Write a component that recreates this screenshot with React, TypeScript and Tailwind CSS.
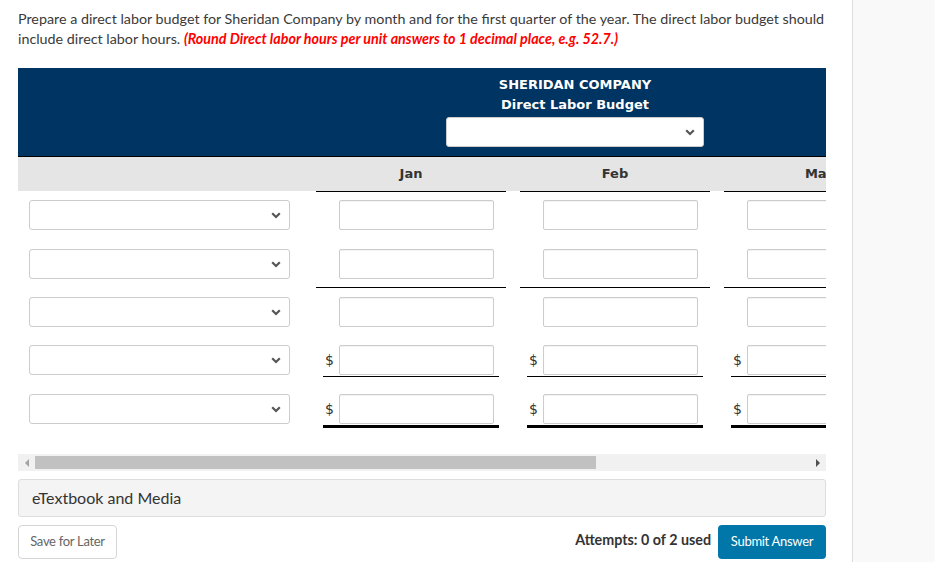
import * as React from "react"

const months = ["Jan", "Feb", "Mar", "Quarter"]

type Row = {
	label: string
	month: string
	outer: string
	dollar: boolean
}

// explicit paddings per row so the rules land where the budget sheet draws them
const rows: Row[] = [
	{ label: "pt-[9px] pb-[19px]", month: "border-t border-black pt-[8px] pb-[19px]", outer: "", dollar: false },
	{ label: "pb-[9px]", month: "border-b border-black pb-[8px]", outer: "", dollar: false },
	{ label: "pt-[9px] pb-[18px]", month: "pt-[9px] pb-[18px]", outer: "", dollar: false },
	{ label: "pb-[19px]", month: "border-b border-black pb-[1px]", outer: "pb-[17px]", dollar: true },
	{ label: "pb-[4px]", month: "border-b-[3px] border-black pb-[1px]", outer: "", dollar: true },
]

function Chevron() {
	return (
		<svg width="10" height="7" viewBox="0 0 10 7" className="text-[#555]">
			<path d="M1.2 1.3 L5 5 L8.8 1.3" fill="none" stroke="currentColor" strokeWidth="2.2" />
		</svg>
	)
}

function SelectBox({ className }: { className: string }) {
	return (
		<div className={`flex h-[30px] items-center justify-end rounded-[3px] border border-[#cccccc] bg-white pr-[8px] ${className}`}>
			<Chevron />
		</div>
	)
}

function Input() {
	return <div className="h-[30px] w-[155px] rounded-[2px] border border-[#cccccc] bg-white shadow-[inset_0_1px_1px_rgba(0,0,0,0.05)]" />
}

function MonthCell({ row }: { row: Row }) {
	if (row.dollar) {
		return (
			<div className={`w-[204px] flex-none ${row.outer}`}>
				<div className={`ml-[7px] flex w-[176px] items-center ${row.month}`}>
					<span className="w-[16px] pl-[2px] text-[14px] text-[#333] [font-family:'DejaVu_Sans',Verdana,sans-serif]">$</span>
					<Input />
				</div>
			</div>
		)
	}
	return (
		<div className="w-[204px] flex-none">
			<div className={`w-[190px] pl-[23px] ${row.month}`}>
				<Input />
			</div>
		</div>
	)
}

export default function App() {
	return (
		<div className="flex min-h-[562px] w-[935px] bg-white text-[#333] [font-family:Lato,'Liberation_Sans',sans-serif]">
			<main className="w-[852px] flex-none pl-[18px] pr-[26px]">
				<p className="pt-[9px] text-[14.3px] leading-[20px] text-[#3a3a3a]">
					Prepare a direct labor budget for Sheridan Company by month and for the first quarter of the year. The direct labor budget should include direct labor hours.{" "}
					<b className="italic text-[#ff0000]">(Round Direct labor hours per unit answers to 1 decimal place, e.g. 52.7.)</b>
				</p>

				<div className="mt-[19px] w-[808px] overflow-hidden">
					<div className="w-[1114px] [font-family:'DejaVu_Sans',Verdana,sans-serif]">
						<div className="flex flex-col items-center border-b border-black bg-[#003462] pb-[9px] pt-[7px] text-white">
							<div className="text-[13px] font-bold leading-[20px]">SHERIDAN COMPANY</div>
							<div className="text-[13px] font-bold leading-[20px]">Direct Labor Budget</div>
							<SelectBox className="mt-[2px] w-[258px]" />
						</div>

						<div className="flex h-[34px] items-center bg-[#e5e5e5]">
							<div className="w-[298px] flex-none" />
							{months.map((m) => (
								<div key={m} className="w-[204px] flex-none">
									<div className="w-[190px] text-center text-[13px] font-bold text-[#333]">{m}</div>
								</div>
							))}
						</div>

						{rows.map((row, i) => (
							<div key={i} className="flex items-start">
								<div className={`w-[298px] flex-none pl-[11px] ${row.label}`}>
									<SelectBox className="w-[261px]" />
								</div>
								{months.map((m) => (
									<MonthCell key={m} row={row} />
								))}
							</div>
						))}
					</div>
				</div>

				{/* horizontal scroll bar of the table */}
				<div className="mt-[26px] flex h-[17px] w-[808px] items-center bg-[#f1f1f1]">
					<div className="flex w-[17px] justify-center">
						<div className="h-0 w-0 border-y-[4px] border-r-[4px] border-y-transparent border-r-[#a3a3a3]" />
					</div>
					<div className="h-[13px] w-[561px] bg-[#c1c1c1]" />
					<div className="flex-1" />
					<div className="flex w-[17px] justify-center">
						<div className="h-0 w-0 border-y-[4px] border-l-[4px] border-y-transparent border-l-[#505050]" />
					</div>
				</div>

				<div className="mt-[8px] flex h-[38px] items-center rounded-[3px] border border-[#dddddd] bg-[#f4f4f4] pl-[13px] text-[16px] text-[#333]">
					eTextbook and Media
				</div>

				<div className="mt-[8px] flex items-center">
					<button className="h-[34px] w-[99px] rounded-[4px] border border-[#d5d5d5] bg-white text-[13px] tracking-[-0.3px] text-[#666]">
						Save for Later
					</button>
					<div className="flex-1" />
					<span className="mb-[5px] mr-[7px] text-[14.3px] font-bold leading-[20px] text-[#333]">Attempts: 0 of 2 used</span>
					<button className="h-[34px] w-[108px] rounded-[4px] bg-[#0077a8] text-[13px] tracking-[-0.3px] text-white">
						Submit Answer
					</button>
				</div>
			</main>
			<aside className="flex-1 border-l border-[#dddddd] bg-[#f9f9f9]" />
		</div>
	)
}
